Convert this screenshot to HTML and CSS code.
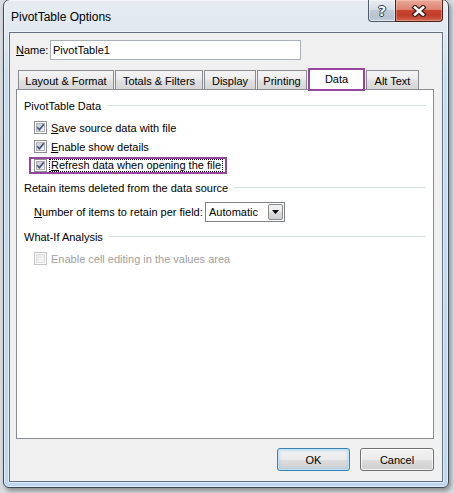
FILE: index.html
```html
<!DOCTYPE html>
<html>
<head>
<meta charset="utf-8">
<title>PivotTable Options</title>
<link rel="stylesheet" href="styles.css">
</head>
<body>
<svg class="defs" width="0" height="0" aria-hidden="true">
  <defs>
    <linearGradient id="cbfill" x1="0" y1="0" x2="1" y2="1">
      <stop offset="0" stop-color="#c3c7cd"/>
      <stop offset="1" stop-color="#f7f8f9"/>
    </linearGradient>
    <linearGradient id="cbdis" x1="0" y1="0" x2="1" y2="1">
      <stop offset="0" stop-color="#e6e6e6"/>
      <stop offset="1" stop-color="#f8f8f8"/>
    </linearGradient>
  </defs>
</svg>
<div class="window">
  <div class="titlebar">
    <span class="title">PivotTable Options</span>
    <div class="caption">
      <div class="cap-help"><span class="qmark">?</span></div>
      <div class="cap-close">
        <svg width="16" height="12" viewBox="0 0 16 12">
          <path d="M4 2.5 L12 9.5 M12 2.5 L4 9.5" stroke="#3a2420" stroke-width="5" stroke-linecap="square" fill="none"/>
          <path d="M4 2.5 L12 9.5 M12 2.5 L4 9.5" stroke="#ffffff" stroke-width="2.6" stroke-linecap="square" fill="none"/>
        </svg>
      </div>
    </div>
  </div>
  <div class="client">
    <div class="name-row">
      <span class="name-label"><u>N</u>ame:</span>
      <div class="textbox">PivotTable1</div>
    </div>
    <div class="tabs">
      <div class="tab w-layout">Layout &amp; Format</div>
      <div class="tab w-totals">Totals &amp; Filters</div>
      <div class="tab w-display">Display</div>
      <div class="tab w-printing">Printing</div>
      <div class="tab w-data active">Data</div>
      <div class="tab w-alt">Alt Text</div>
    </div>
    <div class="panel">
      <div class="group">
        <span>PivotTable Data</span><i class="rule"></i>
      </div>
      <div class="row r1">
        <svg class="cb" width="13" height="13" viewBox="0 0 13 13"><rect x="0.5" y="0.5" width="12" height="12" fill="#fdfdfd" stroke="#8e8f8f"/><rect x="2.5" y="2.5" width="8" height="8" fill="url(#cbfill)" stroke="#aeb2b8"/><path d="M3.2 6.3 L5.4 8.7 L9.8 3.3" fill="none" stroke="#42537f" stroke-width="1.7"/></svg>
        <span class="txt"><u>S</u>ave source data with file</span>
      </div>
      <div class="row">
        <svg class="cb" width="13" height="13" viewBox="0 0 13 13"><rect x="0.5" y="0.5" width="12" height="12" fill="#fdfdfd" stroke="#8e8f8f"/><rect x="2.5" y="2.5" width="8" height="8" fill="url(#cbfill)" stroke="#aeb2b8"/><path d="M3.2 6.3 L5.4 8.7 L9.8 3.3" fill="none" stroke="#42537f" stroke-width="1.7"/></svg>
        <span class="txt"><u>E</u>nable show details</span>
      </div>
      <div class="row focus-row">
        <div class="focus-wrap">
          <svg class="cb" width="13" height="13" viewBox="0 0 13 13"><rect x="0.5" y="0.5" width="12" height="12" fill="#fdfdfd" stroke="#8e8f8f"/><rect x="2.5" y="2.5" width="8" height="8" fill="url(#cbfill)" stroke="#aeb2b8"/><path d="M3.2 6.3 L5.4 8.7 L9.8 3.3" fill="none" stroke="#42537f" stroke-width="1.7"/></svg>
          <span class="focus-text"><u>R</u>efresh data when opening the file</span>
        </div>
      </div>
      <div class="group g2">
        <span>Retain items deleted from the data source</span><i class="rule"></i>
      </div>
      <div class="row num-row">
        <span class="num-label"><u>N</u>umber of items to retain per field:</span>
        <div class="select">
          <span>Automatic</span>
          <div class="drop-btn">
            <svg width="7" height="4" viewBox="0 0 7 4"><path d="M0 0 H7 L3.5 4 Z" fill="#000"/></svg>
          </div>
        </div>
      </div>
      <div class="group g3">
        <span>What-If Analysis</span><i class="rule"></i>
      </div>
      <div class="row dis-row">
        <svg class="cb" width="13" height="13" viewBox="0 0 13 13"><rect x="0.5" y="0.5" width="12" height="12" fill="#fbfbfb" stroke="#c5c5c5"/><rect x="2.5" y="2.5" width="8" height="8" fill="url(#cbdis)" stroke="#dedede"/></svg>
        <span class="txt disabled">Enable cell editing in the values area</span>
      </div>
    </div>
    <div class="buttons">
      <div class="btn ok">OK</div>
      <div class="btn cancel">Cancel</div>
    </div>
  </div>
</div>
</body>
</html>
```

FILE: styles.css
```css
html, body {
  margin: 0;
  padding: 0;
}

body {
  width: 454px;
  height: 493px;
  overflow: hidden;
  background: #d7dade;
  font-family: "Liberation Sans", Arial, sans-serif;
  font-size: 11px;
  color: #000;
}

.defs {
  position: absolute;
  width: 0;
  height: 0;
}

.window {
  box-sizing: border-box;
  width: 446px;
  height: 489px;
  margin: -1px 0 0 3px;
  border: 1px solid #3d4753;
  border-radius: 7px 7px 6px 6px;
  padding: 0 5px 5px 5px;
  background: linear-gradient(#e7ecf2 0, #e0e8f1 32px, #c7dcf1 80px, #bed6ef 100%);
  box-shadow: 2px 3px 4px rgba(0, 0, 0, 0.35), inset 0 0 0 1px rgba(255, 255, 255, 0.55);
  display: flex;
  flex-direction: column;
}

.titlebar {
  height: 32px;
  display: flex;
  align-items: flex-start;
  flex-shrink: 0;
}

.title {
  padding: 10px 0 0 2px;
  font-size: 12px;
  line-height: 14px;
  color: #000;
}

.caption {
  margin-left: auto;
  display: flex;
}

.cap-help {
  box-sizing: border-box;
  width: 27px;
  height: 22px;
  border: 1px solid #4e5a69;
  border-top: none;
  border-right: none;
  border-radius: 0 0 0 4px;
  background: linear-gradient(#e9edf2 0%, #d6dde6 45%, #c1cbd8 50%, #b7c3d2 80%, #c4cfdc 100%);
  box-shadow: inset 0 0 0 1px rgba(255, 255, 255, 0.45);
  display: flex;
  align-items: center;
  justify-content: center;
}

.qmark {
  font-family: "DejaVu Sans", "Liberation Sans", sans-serif;
  font-weight: bold;
  font-size: 14px;
  line-height: 14px;
  color: #f5f7f9;
  text-shadow: 1px 0 0 #2f3944, -1px 0 0 #2f3944, 0 1px 0 #2f3944, 0 -1px 0 #2f3944;
}

.cap-close {
  box-sizing: border-box;
  width: 48px;
  height: 22px;
  border: 1px solid #4a2019;
  border-top: none;
  border-radius: 0 0 4px 0;
  background: linear-gradient(#eaa899 0%, #dd8472 45%, #c9432f 50%, #c13d2a 75%, #d36a52 100%);
  box-shadow: inset 0 0 0 1px rgba(255, 220, 210, 0.35);
  display: flex;
  align-items: center;
  justify-content: center;
}

.client {
  box-sizing: border-box;
  height: 450px;
  border: 1px solid #65717e;
  background: #f0f0f0;
  box-shadow: 0 0 0 1px rgba(255, 255, 255, 0.5);
}

.name-row {
  display: flex;
  align-items: center;
  height: 20px;
  margin: 7px 0 0 6px;
}

.name-label {
  width: 34px;
}

.textbox {
  box-sizing: border-box;
  width: 251px;
  height: 20px;
  border: 1px solid #a9b0b8;
  background: #fff;
  padding-left: 2px;
  line-height: 18px;
}

.tabs {
  display: flex;
  align-items: flex-end;
  gap: 1px;
  height: 19px;
  margin: 10px 0 0 6px;
  padding-left: 2px;
}

.tab {
  box-sizing: border-box;
  height: 19px;
  border: 1px solid #898c95;
  border-bottom: none;
  background: linear-gradient(#f4f4f4 0%, #ececec 45%, #e0e0e0 55%, #d6d6d6 100%);
  display: flex;
  align-items: center;
  justify-content: center;
  padding-top: 1px;
  white-space: nowrap;
}

.w-layout { width: 96px; }
.w-totals { width: 88px; }
.w-display { width: 52px; }
.w-printing { width: 50px; }
.w-data { width: 57px; }
.w-alt { width: 53px; }

.tab.active {
  height: 23px;
  margin-bottom: -2px;
  border: 2px solid #95479d;
  background: #fff;
  padding-top: 0;
  padding-bottom: 2px;
  position: relative;
  z-index: 1;
}

.panel {
  box-sizing: border-box;
  width: 418px;
  height: 350px;
  margin-left: 6px;
  border: 1px solid #898c95;
  background: #fff;
  padding: 8px 7px 0 0;
}

.group {
  display: flex;
  align-items: center;
  height: 15px;
  padding-left: 7px;
  white-space: nowrap;
}

.group .rule {
  flex: 1;
  height: 1px;
  background: #d5dfe5;
  margin-left: 6px;
}

.g2 { margin-top: 5px; }
.g3 { margin-top: 7px; }

.row {
  display: flex;
  align-items: center;
  height: 19px;
  padding-left: 17px;
  white-space: nowrap;
}

.r1 { margin-top: 5px; }

.row .cb {
  flex-shrink: 0;
  margin-right: 4px;
}

.focus-row {
  padding-left: 14px;
}

.focus-wrap {
  box-sizing: border-box;
  display: flex;
  align-items: center;
  width: 194px;
  height: 13px;
  padding-left: 3px;
  outline: 2px solid #95479d;
}

.focus-wrap .cb {
  margin-right: 2px;
}

.focus-text {
  box-sizing: border-box;
  height: 13px;
  line-height: 11px;
  padding: 0 1px;
  border: 1px dotted #000;
}

.num-row {
  height: 20px;
  margin-top: 7px;
}

.num-label {
  width: 171px;
}

.select {
  box-sizing: border-box;
  width: 80px;
  height: 20px;
  border: 1px solid #7f8388;
  background: #fff;
  display: flex;
  align-items: center;
  padding-left: 3px;
}

.drop-btn {
  box-sizing: border-box;
  width: 15px;
  height: 16px;
  margin-left: auto;
  margin-right: 1px;
  border: 1px solid #8a8a8a;
  border-radius: 2px;
  background: linear-gradient(#f3f3f3 0%, #ebebeb 50%, #dcdcdc 51%, #d0d0d0 100%);
  display: flex;
  align-items: center;
  justify-content: center;
}

.dis-row {
  margin-top: 5px;
}

.disabled {
  color: #a0a0a0;
}

.buttons {
  display: flex;
  justify-content: flex-end;
  gap: 10px;
  padding-right: 8px;
  margin-top: 9px;
}

.btn {
  box-sizing: border-box;
  height: 23px;
  border: 1px solid #707070;
  border-radius: 3px;
  background: linear-gradient(#f2f2f2 0%, #ebebeb 50%, #dddddd 51%, #cfcfcf 100%);
  box-shadow: inset 0 0 0 1px rgba(255, 255, 255, 0.75);
  display: flex;
  align-items: center;
  justify-content: center;
}

.btn.ok {
  width: 73px;
  border-color: #3c7fb1;
  box-shadow: inset 0 0 0 1px #bfe3f8, inset 0 0 2px 2px rgba(150, 210, 245, 0.5);
}

.btn.cancel {
  width: 74px;
}
```
